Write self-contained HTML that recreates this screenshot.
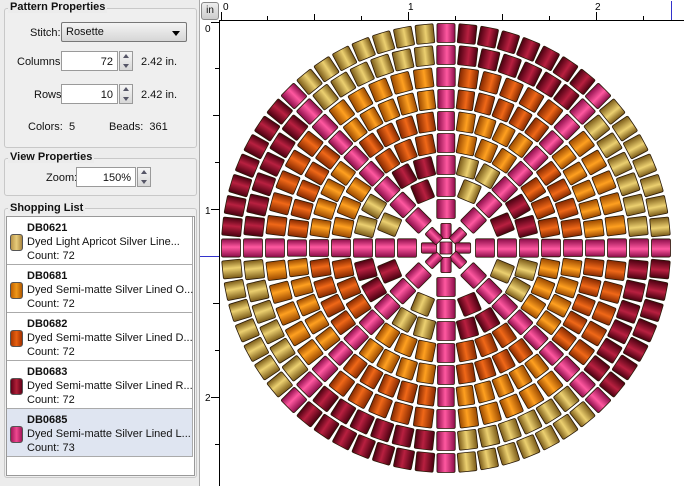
<!DOCTYPE html>
<html><head><style>
body{margin:0;width:684px;height:486px;background:#ececec;font-family:"Liberation Sans",sans-serif;font-size:11px;color:#111;position:relative;overflow:hidden}
.grp{position:absolute;left:4px;width:191px;border:1px solid #c8c8c8;border-radius:3px;background:#efefef}
.ttl{position:absolute;font-weight:bold;font-size:11px;background:#ececec;padding:0 2px}
.abs{position:absolute}
.inp{position:absolute;background:#fff;border:1px solid #9a9a9a;text-align:right;height:20px;line-height:20px;box-sizing:border-box;padding-right:4px}
.spin{position:absolute;width:14px;height:20px;border:1px solid #9a9a9a;box-sizing:border-box;background:linear-gradient(#f6f6f6,#d8d8d8)}
.spin:before{content:"";position:absolute;left:3px;top:2px;border:3px solid transparent;border-bottom:4px solid #556;border-top:0}
.spin:after{content:"";position:absolute;left:3px;bottom:2px;border:3px solid transparent;border-top:4px solid #556;border-bottom:0}
.item{position:absolute;left:7px;width:185px;height:47px;background:#fff;border-bottom:1px solid #aaa;border-right:1px solid #aaa}
.item b{position:absolute;left:20px;top:5px}
.item .d{position:absolute;left:20px;top:19px;white-space:nowrap}
.item .c{position:absolute;left:20px;top:33px}
.sw{position:absolute;left:3px;top:17px;width:11px;height:15px;border-radius:3px;border:1px solid #555}
</style></head><body>
<div class="grp" style="top:8px;height:138px"></div>
<div class="ttl" style="left:8px;top:1px">Pattern Properties</div>
<div class="abs" style="left:30px;top:27px">Stitch:</div>
<div class="abs" style="left:61px;top:22px;width:126px;height:20px;border:1px solid #777;border-radius:2px;background:linear-gradient(#f4f4f4,#d6d6d6);box-sizing:border-box;padding:3px 4px">Rosette<span style="position:absolute;right:6px;top:8px;border:4px solid transparent;border-top:5px solid #000;border-bottom:0"></span></div>
<div class="abs" style="left:17px;top:56px">Columns:</div>
<div class="inp" style="left:61px;top:51px;width:57px">72</div><div class="spin" style="left:119px;top:51px"></div>
<div class="abs" style="left:141px;top:56px">2.42 in.</div>
<div class="abs" style="left:34px;top:89px">Rows:</div>
<div class="inp" style="left:61px;top:84px;width:57px">10</div><div class="spin" style="left:119px;top:84px"></div>
<div class="abs" style="left:141px;top:89px">2.42 in.</div>
<div class="abs" style="left:28px;top:121px">Colors:&nbsp; 5</div>
<div class="abs" style="left:109px;top:121px">Beads:&nbsp; 361</div>
<div class="grp" style="top:158px;height:36px"></div>
<div class="ttl" style="left:8px;top:151px">View Properties</div>
<div class="abs" style="left:46px;top:172px">Zoom:</div>
<div class="inp" style="left:76px;top:167px;width:60px">150%</div><div class="spin" style="left:137px;top:167px"></div>
<div class="grp" style="top:208px;height:268px"></div>
<div class="ttl" style="left:8px;top:202px">Shopping List</div>
<div class="abs" style="left:6px;top:216px;width:187px;height:258px;background:#fff;border:1px solid #999"></div>
<div class="item" style="top:217px"><div class="sw" style="background:linear-gradient(90deg,#b8944a,#e8cc7a,#a88440)"></div><b>DB0621</b><div class="d">Dyed Light Apricot Silver Line...</div><div class="c">Count: 72</div></div>
<div class="item" style="top:265px"><div class="sw" style="background:linear-gradient(90deg,#c06000,#f09818,#b05800)"></div><b>DB0681</b><div class="d">Dyed Semi-matte Silver Lined O...</div><div class="c">Count: 72</div></div>
<div class="item" style="top:313px"><div class="sw" style="background:linear-gradient(90deg,#a83800,#e86010,#a03000)"></div><b>DB0682</b><div class="d">Dyed Semi-matte Silver Lined D...</div><div class="c">Count: 72</div></div>
<div class="item" style="top:361px"><div class="sw" style="background:linear-gradient(90deg,#600018,#b02038,#600018)"></div><b>DB0683</b><div class="d">Dyed Semi-matte Silver Lined R...</div><div class="c">Count: 72</div></div>
<div class="item" style="top:409px;background:#dfe5f1"><div class="sw" style="background:linear-gradient(90deg,#a01858,#f04890,#a01858)"></div><b>DB0685</b><div class="d">Dyed Semi-matte Silver Lined L...</div><div class="c">Count: 73</div></div>
<div class="abs" style="left:199px;top:0;width:485px;height:486px;background:#fff;border-left:1px solid #aaa"></div>
<div class="abs" style="left:201px;top:2px;width:16px;height:16px;border:1px solid #888;border-radius:3px;background:linear-gradient(#eee,#ccc);text-align:center;line-height:16px;font-size:10px">in</div>
<svg class="abs" style="left:0;top:0" width="684" height="486">
<line x1="220" y1="20.5" x2="684" y2="20.5" stroke="#000"/>
<line x1="219.5" y1="20" x2="219.5" y2="486" stroke="#000"/>
<g id="tk" stroke="#000"></g>
<line x1="671.5" y1="1" x2="671.5" y2="20" stroke="#33c"/>
<line x1="200" y1="256.5" x2="219" y2="256.5" stroke="#33c"/>
<g font-size="10" font-family="Liberation Sans"><text x="223" y="10">0</text><text x="408" y="10">1</text><text x="595" y="10">2</text>
<text x="205" y="32">0</text><text x="205" y="214">1</text><text x="205" y="401">2</text></g>
<defs id="df"></defs>
<g id="bd"></g>
</svg>
<script>
var tk=document.getElementById('tk'),s='';
for(var i=0;i<10;i++){var x=221+i*46.9;var h=(i%4==0)?8:(i%2==0?6:4);s+='<line x1="'+(x|0)+'.5" y1="'+(20-h)+'" x2="'+(x|0)+'.5" y2="20"/>';var y=22+i*46.9;s+='<line x1="'+(219-h)+'" y1="'+(y|0)+'.5" x2="219" y2="'+(y|0)+'.5"/>';}
tk.innerHTML=s;
var cols=[['#7a5a18','#ecd070'],['#9a4800','#ffa020'],['#842800','#f06818'],['#4a0010','#b82040'],['#8a0c48','#ff58a0']];
var d='';cols.forEach(function(c,i){d+='<linearGradient id="g'+i+'" x1="0" y1="0" x2="1" y2="0"><stop offset="0" stop-color="'+c[0]+'"/><stop offset="0.55" stop-color="'+c[1]+'"/><stop offset="1" stop-color="'+c[0]+'"/></linearGradient>';});
document.getElementById('df').innerHTML=d;
var cx=446,cy=248,b='';
var evenSeq=[3,2,1,0,3],oddSeq=[0,1,2,3,0];
b+='<rect x="'+(cx-6)+'" y="'+(cy-6)+'" width="12" height="12" fill="url(#g4)" stroke="#2a1a08" stroke-width="0.8"/>';
for(var k=1;k<=10;k++){var r=215-(10-k)*22;var n=Math.max(8,Math.round(2*Math.PI*r/21/8)*8);
var p=Math.floor((10-k)/2);
var w=Math.min(2*Math.PI*r/n-3,18.5),hh=Math.min(19,r*0.9);
for(var j=0;j<n;j++){var a=j*360/n;var ci;
var sec=Math.floor(((a+0.001)%360)/45);
if(j%(n/8)==0)ci=4;else ci=(sec%2==0?evenSeq:oddSeq)[p];
b+='<g transform="translate('+cx+' '+cy+') rotate('+a+') translate(0 '+(-r)+')"><rect x="'+(-w/2)+'" y="'+(-hh/2)+'" width="'+w+'" height="'+hh+'" rx="1.5" fill="url(#g'+ci+')" stroke="#2a1a08" stroke-width="0.8"/></g>';}}
document.getElementById('bd').innerHTML=b;
</script>
</body></html>
